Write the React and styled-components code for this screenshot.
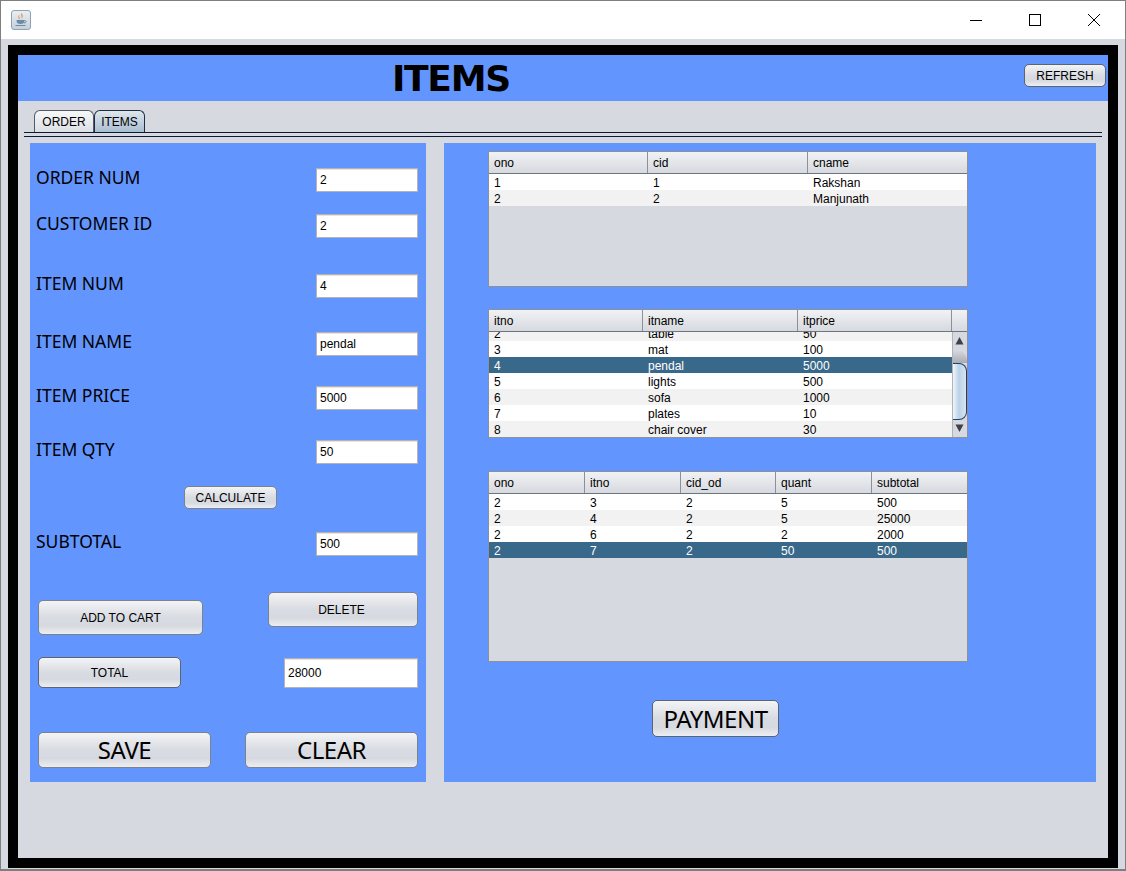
import styled, { createGlobalStyle } from 'styled-components'

const Global = createGlobalStyle`
  html, body { margin: 0; padding: 0; background: #fff; }
  * { box-sizing: border-box; }
`

const Win = styled.div`
  width: 1126px;
  height: 871px;
  border: 1px solid #7f7f7f;
  border-bottom-width: 2px;
  background: #d6d9df;
  display: flex;
  flex-direction: column;
  overflow: hidden;
  font-family: "Liberation Sans", Arial, sans-serif;
  color: #000;
`
const TitleBar = styled.div`
  height: 38px;
  flex: none;
  background: #fff;
  display: flex;
  align-items: center;
  padding-left: 10px;
`
const JavaIcon = styled.div`
  width: 20px;
  height: 20px;
  border: 1px solid #8da2b5;
  border-radius: 3px;
  background: linear-gradient(#e9eef3, #c5d0da);
  display: flex;
`
const WinButtons = styled.div`
  margin-left: auto;
  margin-right: 2px;
  display: flex;
`
const WinBtn = styled.div`
  width: 59px;
  height: 38px;
  display: flex;
  align-items: center;
  justify-content: center;
`
const Client = styled.div`
  flex: 1;
  padding: 6px 6px 0 7px;
`
const Frame = styled.div`
  width: 1110px;
  height: 823px;
  border: 10px solid #000;
  background: #d6d9df;
`
const Header = styled.div`
  height: 46px;
  background: #6395ff;
  display: flex;
  align-items: flex-start;
`
const Title = styled.h1`
  margin: 1px 0 0 374px;
  font: bold 36px "DejaVu Sans", sans-serif;
  letter-spacing: -1.3px;
  line-height: 46px;
`
const Btn = styled.button`
  display: block;
  flex: none;
  width: ${p => p.$w}px;
  height: ${p => p.$h}px;
  margin: ${p => p.$m || 0};
  padding: 0 ${p => p.$pr || 0}px 0 0;
  border: 1px solid ${p => p.$dark ? '#5c6470' : '#7c828c'};
  border-radius: 5px;
  background: linear-gradient(#f3f4f6 0%, #d8dbe1 50%, #d6d9df 75%, #eceef1 100%);
  font-family: ${p => p.$big ? '"Noto Sans", sans-serif' : '"Liberation Sans", Arial, sans-serif'};
  font-size: ${p => p.$fs || 12}px;
  letter-spacing: ${p => p.$big ? '-0.5px' : 'normal'};
  color: #000;
  line-height: 1;
`
const Tabs = styled.div`
  margin: 9px 6px 0;
  height: 27px;
  border-bottom: 1px solid #0b1a33;
`
const TabStrip = styled.div`
  height: 23px;
  border-bottom: 1px solid #0b1a33;
  padding-left: 10px;
  display: flex;
`
const Tab = styled.div`
  width: ${p => p.$w}px;
  height: 22px;
  border: 1px solid ${p => p.$on ? '#1d2d44' : '#555b66'};
  border-bottom: none;
  border-radius: 6px 6px 0 0;
  background: ${p => p.$on ? 'linear-gradient(#dfe5ec, #a9bed2)' : 'linear-gradient(#f6f7f8, #dcdfe4)'};
  font-size: 12px;
  line-height: 23px;
  text-align: center;
`
const Panels = styled.div`
  display: flex;
  margin: 6px 12px 0;
  gap: 18px;
`
const FormPanel = styled.div`
  width: 396px;
  height: 639px;
  background: #6395ff;
  padding: 0 8px 0 6px;
`
const FieldRow = styled.div`
  display: flex;
  justify-content: space-between;
  align-items: flex-start;
  height: 24px;
  margin-top: ${p => p.$top}px;
`
const ButtonRow = styled.div`
  display: flex;
  justify-content: space-between;
  align-items: flex-start;
  padding-left: 2px;
  margin-top: ${p => p.$top}px;
`
const Label = styled.label`
  font: 17.5px/20px "Noto Sans", sans-serif;
  margin-top: ${p => p.$down || -1}px;
`
const Field = styled.div`
  width: ${p => p.$w || 102}px;
  height: ${p => p.$h || 24}px;
  margin-top: ${p => p.$m || 0}px;
  background: #fff;
  border: 1px solid #b4b4b4;
  box-shadow: inset 0 1px #e4e4e4;
  font-size: 12px;
  line-height: ${p => (p.$h || 24) - 2}px;
  padding-left: 3px;
`
const TablesPanel = styled.div`
  width: 652px;
  height: 639px;
  background: #6395ff;
  padding: 8px 0 0 44px;
`
const TableBox = styled.div`
  width: 480px;
  height: ${p => p.$h}px;
  margin-top: ${p => p.$top || 0}px;
  border: 1px solid #8b9099;
  background: #d6d9df;
  display: flex;
  flex-direction: column;
  overflow: hidden;
`
const HeadRow = styled.div`
  display: flex;
  height: 22px;
  flex: none;
  border-bottom: 1px solid #6d7480;
  background: linear-gradient(#f1f2f4, #d6d9df);
`
const HeadCell = styled.div`
  width: ${p => p.$w}px;
  flex: none;
  padding-left: 5px;
  font-size: 12px;
  line-height: 23px;
  border-right: 1px solid #8b9099;
  &:last-child { border-right: none; }
`
const TableBody = styled.div`
  flex: 1;
  display: flex;
  min-height: 0;
`
const Rows = styled.div`
  flex: 1;
  min-width: 0;
  overflow: hidden;
`
const DataRow = styled.div`
  display: flex;
  height: 16px;
  margin-top: ${p => p.$shift || 0}px;
  background: ${p => p.$sel ? '#39698a' : p.$odd ? '#f2f2f2' : '#fff'};
  color: ${p => p.$sel ? '#fff' : '#000'};
`
const Cell = styled.div`
  width: ${p => p.$w}px;
  flex: none;
  padding-left: 5px;
  font-size: 12px;
  line-height: 18px;
  height: 16px;
  white-space: nowrap;
`
const ScrollBar = styled.div`
  width: 15px;
  flex: none;
  background: #d6d9df;
  border-left: 1px solid #aeb2ba;
  display: flex;
  flex-direction: column;
  align-items: center;
`
const Arrow = styled.div`
  height: 15px;
  flex: none;
  display: flex;
  align-items: center;
  justify-content: center;
  padding-right: 2px;
  margin-top: ${p => p.$auto ? 'auto' : '1px'};
  margin-bottom: ${p => p.$auto ? '1px' : '0'};
`
const ThumbShadow = styled.div`
  width: 100%;
  height: 13px;
  flex: none;
  margin-top: 2px;
  background: linear-gradient(#d6d9df, #a9acb2);
  border-radius: 0 10px 0 0;
`
const Thumb = styled.div`
  width: 100%;
  height: 57px;
  flex: none;
  background: linear-gradient(90deg, #f2f6fa, #b9d2e8 45%, #d6e4f1);
  border: 1.5px solid #25415f;
  border-left: none;
  border-radius: 0 8px 8px 0;
`
const PayRow = styled.div`
  padding-left: 164px;
`

const DataTable = ({ h, top, cols, widths, rows, sel, shift, scroll }) => (
  <TableBox $h={h} $top={top}>
    <HeadRow>
      {cols.map((c, i) => <HeadCell key={c} $w={widths[i]}>{c}</HeadCell>)}
      {scroll && <HeadCell $w={15} />}
    </HeadRow>
    <TableBody>
      <Rows>
        {rows.map((r, i) => (
          <DataRow key={i} $odd={i % 2 === (shift ? 0 : 1)} $sel={i === sel} $shift={i === 0 ? shift : 0}>
            {r.map((v, j) => <Cell key={j} $w={widths[j]}>{v}</Cell>)}
          </DataRow>
        ))}
      </Rows>
      {scroll && (
        <ScrollBar>
          <Arrow>
            <svg width="9" height="9" viewBox="0 0 9 9"><path d="M4.5 1 L8.5 8.5 H0.5 Z" fill="#3c4048" /></svg>
          </Arrow>
          <ThumbShadow />
          <Thumb />
          <Arrow $auto>
            <svg width="9" height="9" viewBox="0 0 9 9"><path d="M0.5 0.5 H8.5 L4.5 8 Z" fill="#3c4048" /></svg>
          </Arrow>
        </ScrollBar>
      )}
    </TableBody>
  </TableBox>
)

const fields = [
  { label: 'ORDER NUM', value: '2', top: 25 },
  { label: 'CUSTOMER ID', value: '2', top: 22 },
  { label: 'ITEM NUM', value: '4', top: 36 },
  { label: 'ITEM NAME', value: 'pendal', top: 34 },
  { label: 'ITEM PRICE', value: '5000', top: 30 },
  { label: 'ITEM QTY', value: '50', top: 30 },
]

export default function App() {
  return (
    <Win>
      <Global />
      <TitleBar>
        <JavaIcon>
          <svg width="18" height="18" viewBox="0 0 18 18">
            <path d="M9.5 2 C8 4 11 5 9 7.5 C12 6 10.5 4 9.5 2 Z" fill="#e8873a" />
            <path d="M7 4.5 C6 6 8 6.5 7 8" stroke="#e8873a" fill="none" />
            <path d="M4.5 9 H12.5 C12.5 12 11 13 8.5 13 C6 13 4.5 12 4.5 9 Z" fill="#6b8aa3" />
            <path d="M12.5 9.5 C15 9.5 14.5 12 12 12" stroke="#6b8aa3" fill="none" />
            <path d="M3.5 14.5 H13.5" stroke="#6b8aa3" />
          </svg>
        </JavaIcon>
        <WinButtons>
          <WinBtn>
            <svg width="14" height="14" viewBox="0 0 14 14"><path d="M1 7.5 H13" stroke="#000" /></svg>
          </WinBtn>
          <WinBtn>
            <svg width="14" height="14" viewBox="0 0 14 14"><rect x="1.5" y="1.5" width="11" height="11" fill="none" stroke="#000" /></svg>
          </WinBtn>
          <WinBtn>
            <svg width="14" height="14" viewBox="0 0 14 14"><path d="M1 1 L13 13 M13 1 L1 13" stroke="#000" /></svg>
          </WinBtn>
        </WinButtons>
      </TitleBar>
      <Client>
        <Frame>
          <Header>
            <Title>ITEMS</Title>
            <Btn $w={82} $h={23} $dark $m="9px 2px 0 auto">REFRESH</Btn>
          </Header>
          <Tabs>
            <TabStrip>
              <Tab $w={60}>ORDER</Tab>
              <Tab $w={51} $on>ITEMS</Tab>
            </TabStrip>
          </Tabs>
          <Panels>
            <FormPanel>
              {fields.map(f => (
                <FieldRow key={f.label} $top={f.top}>
                  <Label>{f.label}</Label>
                  <Field>{f.value}</Field>
                </FieldRow>
              ))}
              <Btn $w={93} $h={23} $m="22px 0 0 148px">CALCULATE</Btn>
              <FieldRow $top={23}>
                <Label>SUBTOTAL</Label>
                <Field>500</Field>
              </FieldRow>
              <ButtonRow $top={36}>
                <Btn $w={165} $h={35} $m="8px 0 0 0">ADD TO CART</Btn>
                <Btn $w={150} $h={35} $pr={3}>DELETE</Btn>
              </ButtonRow>
              <ButtonRow $top={22}>
                <Btn $w={143} $h={31} $dark>TOTAL</Btn>
                <Field $w={134} $h={30} $m={1}>28000</Field>
              </ButtonRow>
              <ButtonRow $top={44}>
                <Btn $w={173} $h={36} $big $fs={24}>SAVE</Btn>
                <Btn $w={173} $h={36} $big $fs={24}>CLEAR</Btn>
              </ButtonRow>
            </FormPanel>
            <TablesPanel>
              <DataTable
                h={136}
                cols={['ono', 'cid', 'cname']}
                widths={[159, 160, 159]}
                rows={[['1', '1', 'Rakshan'], ['2', '2', 'Manjunath']]}
              />
              <DataTable
                h={129}
                top={22}
                scroll
                shift={-7}
                sel={2}
                cols={['itno', 'itname', 'itprice']}
                widths={[154, 155, 154]}
                rows={[
                  ['2', 'table', '50'],
                  ['3', 'mat', '100'],
                  ['4', 'pendal', '5000'],
                  ['5', 'lights', '500'],
                  ['6', 'sofa', '1000'],
                  ['7', 'plates', '10'],
                  ['8', 'chair cover', '30'],
                ]}
              />
              <DataTable
                h={191}
                top={33}
                sel={3}
                cols={['ono', 'itno', 'cid_od', 'quant', 'subtotal']}
                widths={[96, 96, 95, 96, 95]}
                rows={[
                  ['2', '3', '2', '5', '500'],
                  ['2', '4', '2', '5', '25000'],
                  ['2', '6', '2', '2', '2000'],
                  ['2', '7', '2', '50', '500'],
                ]}
              />
              <PayRow>
                <Btn $w={127} $h={37} $m="38px 0 0 0" $big $fs={24} $dark>PAYMENT</Btn>
              </PayRow>
            </TablesPanel>
          </Panels>
        </Frame>
      </Client>
    </Win>
  )
}
